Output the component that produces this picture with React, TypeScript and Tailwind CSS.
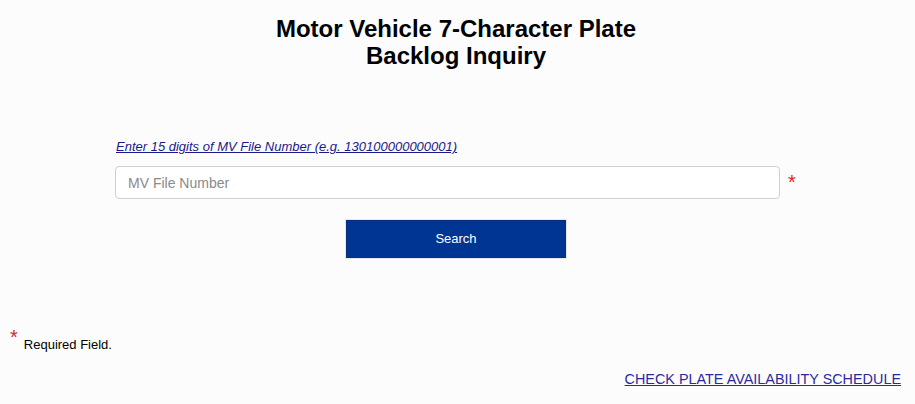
export default function App() {
  return (
    <div
      className="w-[915px] h-[404px] bg-[#fcfcfc] text-black relative"
      style={{ fontFamily: '"Liberation Sans", Arial, sans-serif' }}
    >
      {/* Heading */}
      <div className="pt-[15px] text-center pr-[3px]">
        <h1 className="text-[24px] font-bold leading-[27px]">
          Motor Vehicle 7-Character Plate
          <br />
          Backlog Inquiry
        </h1>
      </div>

      {/* Form */}
      <div className="pl-[115px] pr-[116px] mt-[71px]">
        <a href="#" className="text-[13px] italic underline text-[#1a1a8c] leading-[14px] block ml-[1px]">
          Enter 15 digits of MV File Number (e.g. 130100000000001)
        </a>
        <div className="flex items-start mt-[12px]">
          <input
            type="text"
            placeholder="MV File Number"
            className="w-[665px] h-[33px] border border-[#cfcfcf] rounded-[4px] bg-white px-[12px] text-[14px] placeholder:text-[#8a8a8a] outline-none"
          />
          <span className="text-[#d42a2a] text-[20px] leading-none ml-[8px] mt-[6px]">*</span>
        </div>
        <div className="flex justify-center mt-[21px] pr-[2px]">
          <button className="w-[220px] h-[38px] bg-[#003594] text-white text-[13px] border border-[#0b2e7a] shadow-[0_0_0_1px_#e8e8e8]">
            Search
          </button>
        </div>
      </div>

      {/* Footer */}
      <div className="pl-[10px] mt-[69px] flex items-start">
        <span className="text-[#d42a2a] text-[20px] leading-none">*</span>
        <span className="text-[13px] ml-[6px] mt-[10px] leading-[15px]">Required Field.</span>
      </div>
      <div className="flex justify-end pr-[14px] mt-[19px]">
        <a href="#" className="text-[14.4px] underline text-[#2a2aa0] leading-[16px]">
          CHECK PLATE AVAILABILITY SCHEDULE
        </a>
      </div>
    </div>
  )
}
